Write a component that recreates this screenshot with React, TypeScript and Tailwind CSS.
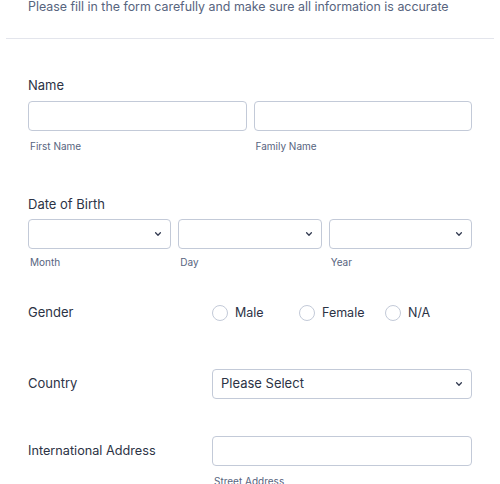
import React from "react";

const Chevron = () => (
  <svg width="10" height="10" viewBox="0 0 10 10" fill="none" className="shrink-0">
    <path d="M2.6 3.8L5 6.2L7.4 3.8" stroke="#343c52" strokeWidth="1.3" strokeLinecap="round" strokeLinejoin="round" />
  </svg>
);

const Box = ({ children, className = "" }: { children?: React.ReactNode; className?: string }) => (
  <div className={`h-[30px] rounded-[4px] border border-[#c3cad8] bg-white flex items-center ${className}`}>{children}</div>
);

const Sub = ({ children, mt = "mt-[9px]" }: { children: React.ReactNode; mt?: string }) => (
  <div className={`${mt} text-[10px] leading-[12px] text-[#57647e] pl-[2px]`}>{children}</div>
);

const Radio = ({ label, w }: { label: string; w: string }) => (
  <div className={`flex items-center ${w}`}>
    <span className="w-[16px] h-[16px] rounded-full border border-[#c3cad8] bg-white" />
    <span className="ml-[7px] text-[12.5px] text-[#2c3345]">{label}</span>
  </div>
);

export default function App() {
  return (
    <div className="w-[500px] h-[484px] overflow-hidden bg-white" style={{ fontFamily: "Inter, 'Noto Sans', sans-serif" }}>
      <div className="px-[28px] h-[13px] leading-[13px] text-[12.4px] text-[#57647e]">
        Please fill in the form carefully and make sure all information is accurate
      </div>
      <div className="mx-[6px] mt-[25px] border-t border-[#e3e5ec]" />

      <div className="px-[28px]">
        <div className="pt-[38px]">
          <div className="text-[13px] leading-[16px] text-[#2c3345]">Name</div>
          <div className="mt-[8px] grid grid-cols-2 gap-[7px]">
            <div>
              <Box />
              <Sub>First Name</Sub>
            </div>
            <div>
              <Box />
              <Sub>Family Name</Sub>
            </div>
          </div>
        </div>

        <div className="pt-[44px]">
          <div className="text-[13px] leading-[16px] text-[#2c3345]">Date of Birth</div>
          <div className="mt-[7px] grid grid-cols-3 gap-[7px]">
            {["Month", "Day", "Year"].map((s) => (
              <div key={s}>
                <Box className="justify-end pr-[7px]">
                  <Chevron />
                </Box>
                <Sub mt="mt-[7px]">{s}</Sub>
              </div>
            ))}
          </div>
        </div>

        <div className="mt-[35px] flex items-center h-[20px]">
          <div className="w-[184px] text-[13px] text-[#2c3345]">Gender</div>
          <div className="flex items-center">
            <Radio label="Male" w="w-[87px]" />
            <Radio label="Female" w="w-[86px]" />
            <Radio label="N/A" w="" />
          </div>
        </div>

        <div className="mt-[46px] flex items-center">
          <div className="w-[184px] text-[13px] text-[#2c3345]">Country</div>
          <Box className="flex-1 justify-between pl-[8px] pr-[7px]">
            <span className="text-[13px] text-[#2c3345]">Please Select</span>
            <Chevron />
          </Box>
        </div>

        <div className="mt-[37px] flex">
          <div className="w-[184px] pt-[7px] text-[12.7px] leading-[16px] text-[#2c3345]">International Address</div>
          <div className="flex-1">
            <Box />
            <Sub>Street Address</Sub>
          </div>
        </div>
      </div>
    </div>
  );
}
